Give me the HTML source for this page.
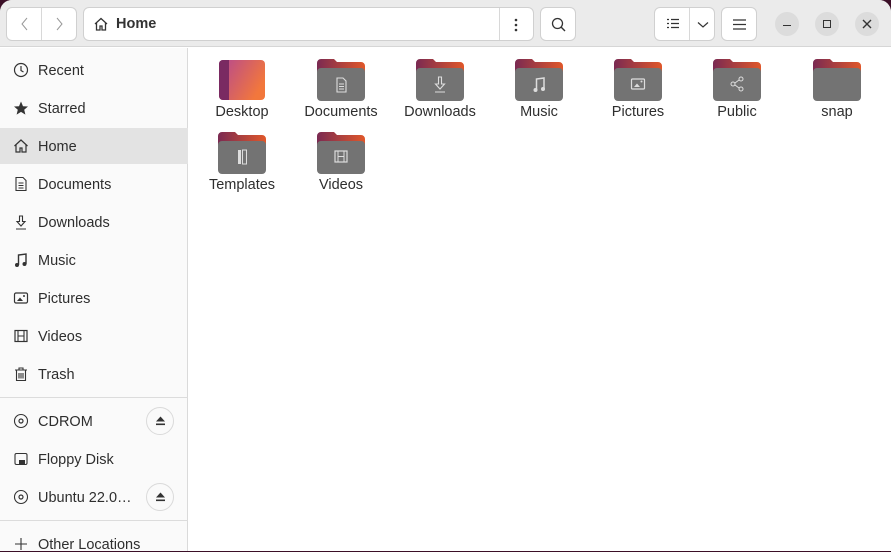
<!DOCTYPE html>
<html><head><meta charset="utf-8"><style>
*{margin:0;padding:0;box-sizing:border-box}
body{width:891px;height:552px;background:#3b0f27;font-family:"Liberation Sans","DejaVu Sans",sans-serif;position:relative;overflow:hidden;color:#2e2e2e}
.win{position:absolute;left:0;top:0;width:891px;height:551px;background:#fff;border-radius:12px 12px 0 0;overflow:hidden}
.hdr{position:absolute;left:0;top:0;width:891px;height:47px;background:#ebebeb;border-bottom:1px solid #d6d6d6}
.btn{position:absolute;background:#fff;border:1px solid #d0d0d0;border-radius:6px}
.side{position:absolute;left:0;top:48px;width:188px;height:503px;background:#fafafa;border-right:1px solid #dadada}
.it{position:absolute;left:0;width:188px;height:36px;font-size:14.5px;line-height:38px;padding-left:38px;color:#2e2e2e}
.it svg{position:absolute;left:13px;top:10px}
.sel{background:#e3e3e3}
.sep{position:absolute;left:0;width:188px;height:1px;background:#dcdcdc}
.ej{position:absolute;left:146px;width:28px;height:28px;border:1px solid #dadada;border-radius:50%;background:#fafafa}
.f{position:absolute;width:100px;text-align:center;font-size:14.5px;line-height:17px}
.f svg{display:block;margin:0 auto 3px}
.wc{position:absolute;top:12px;width:24px;height:24px;border-radius:50%;background:#dcdcdc}
</style></head><body>
<div class="win">
<div class="hdr">
 <div class="btn" style="left:6px;top:7px;width:71px;height:34px"><div style="position:absolute;left:34px;top:0;width:1px;height:32px;background:#d8d8d8"></div>
 <svg style="position:absolute;left:14px;top:9px" width="8" height="14"><path d="M6 1L1 7L6 13" stroke="#999" fill="none"/></svg>
 <svg style="position:absolute;left:48px;top:9px" width="8" height="14"><path d="M2 1L7 7L2 13" stroke="#999" fill="none"/></svg></div>
 <div class="btn" style="left:83px;top:7px;width:451px;height:34px">
 <svg style="position:absolute;left:9px;top:8px" width="16" height="16"><path d="M2 8L8 2.5L14 8M3.5 7V14H7V10H9V14H12.5V7" stroke="#333" stroke-width="1.3" fill="none"/></svg>
 <span style="position:absolute;left:32px;top:8px;font-weight:bold;font-size:14.5px;line-height:17px;color:#333">Home</span>
 <div style="position:absolute;left:415px;top:0;width:1px;height:32px;background:#d8d8d8"></div>
 <svg style="position:absolute;left:430px;top:10px" width="4" height="14"><circle cx="2" cy="2" r="1.3" fill="#333"/><circle cx="2" cy="7" r="1.3" fill="#333"/><circle cx="2" cy="12" r="1.3" fill="#333"/></svg></div>
 <div class="btn" style="left:540px;top:7px;width:36px;height:34px"><svg style="position:absolute;left:10px;top:9px" width="16" height="16"><circle cx="6.5" cy="6.5" r="5" stroke="#333" stroke-width="1.3" fill="none"/><path d="M10 10L14 14" stroke="#333" stroke-width="1.4"/></svg></div>
 <div class="btn" style="left:654px;top:7px;width:61px;height:34px"><div style="position:absolute;left:34px;top:0;width:1px;height:32px;background:#d8d8d8"></div>
 <svg style="position:absolute;left:11px;top:10px" width="14" height="12"><path d="M1 1.5h2M1 5.5h2M1 9.5h2M5 1.5h8M5 5.5h8M5 9.5h8" stroke="#333" stroke-width="1.3"/></svg>
 <svg style="position:absolute;left:42px;top:13px" width="12" height="8"><path d="M1 1.5L6 6L11 1.5" stroke="#333" stroke-width="1.2" fill="none"/></svg></div>
 <div class="btn" style="left:721px;top:7px;width:36px;height:34px"><svg style="position:absolute;left:11px;top:11px" width="13" height="11"><path d="M0 1h13M0 5.5h13M0 10h13" stroke="#333" stroke-width="1.2"/></svg></div>
 <div class="wc" style="left:775px"><div style="position:absolute;left:8px;top:13px;width:8px;height:1.3px;background:#333"></div></div>
 <div class="wc" style="left:815px"><div style="position:absolute;left:8px;top:8px;width:8px;height:8px;border:1.3px solid #333"></div></div>
 <div class="wc" style="left:855px"><svg style="position:absolute;left:7px;top:7px" width="10" height="10"><path d="M1 1L9 9M9 1L1 9" stroke="#333" stroke-width="1.4"/></svg></div>
</div>
<div class="side">
 <div class="it" style="top:4px"><svg width="16" height="16"><circle cx="8" cy="8" r="6.5" stroke="#333" fill="none" stroke-width="1.2"/><path d="M8 4V8.5L10.5 10" stroke="#333" fill="none" stroke-width="1.2"/></svg>Recent</div>
 <div class="it" style="top:42px"><svg width="16" height="16"><path d="M8 1.5L10 6.2L15 6.5L11.2 9.7L12.4 14.6L8 11.9L3.6 14.6L4.8 9.7L1 6.5L6 6.2Z" fill="#333"/></svg>Starred</div>
 <div class="it sel" style="top:80px"><svg width="16" height="16"><path d="M1.5 8L8 2L14.5 8M3 7V14H7V10H9V14H13V7" stroke="#333" stroke-width="1.2" fill="none"/></svg>Home</div>
 <div class="it" style="top:118px"><svg width="16" height="16"><path d="M3 1.5H10L13 4.5V14.5H3Z M5.5 7H10.5M5.5 9.5H10.5M5.5 12H10.5" stroke="#333" stroke-width="1.1" fill="none"/></svg>Documents</div>
 <div class="it" style="top:156px"><svg width="16" height="16"><path d="M6.5 2H9.5V7.5H12L8 12L4 7.5H6.5Z M3 15H13" stroke="#333" stroke-width="1.1" fill="none"/></svg>Downloads</div>
 <div class="it" style="top:194px"><svg width="16" height="16"><path d="M5.5 13V3L13 2V12" stroke="#333" stroke-width="1.4" fill="none"/><circle cx="4" cy="13" r="2" fill="#333"/><circle cx="11.5" cy="12" r="2" fill="#333"/></svg>Music</div>
 <div class="it" style="top:232px"><svg width="16" height="16"><rect x="1.5" y="3" width="13" height="10" rx="1.5" stroke="#333" stroke-width="1.2" fill="none"/><path d="M4 11L7 7.5L10 11Z" fill="#333"/><circle cx="11" cy="6" r="1" fill="#333"/></svg>Pictures</div>
 <div class="it" style="top:270px"><svg width="16" height="16"><rect x="2" y="2.5" width="12" height="11" stroke="#333" stroke-width="1.2" fill="none"/><path d="M5 2.5V13.5M11 2.5V13.5M5 8H11" stroke="#333" stroke-width="1.1"/></svg>Videos</div>
 <div class="it" style="top:308px"><svg width="16" height="16"><path d="M2 4H14M6 4V2H10V4M3.5 4.5V14.5H12.5V4.5M6 7V12.5M8 7V12.5M10 7V12.5" stroke="#333" stroke-width="1.1" fill="none"/></svg>Trash</div>
 <div class="sep" style="top:349px"></div>
 <div class="it" style="top:355px"><svg width="16" height="16"><circle cx="8" cy="8" r="6.5" stroke="#333" fill="none" stroke-width="1.1"/><circle cx="8" cy="8" r="2" stroke="#333" fill="none" stroke-width="1.2"/></svg>CDROM</div>
 <div class="ej" style="top:359px"><svg style="position:absolute;left:8px;top:8px" width="11" height="10"><path d="M5.5 0.5L10 5.5H1Z" fill="#333"/><rect x="1" y="7.5" width="9" height="1.6" fill="#333"/></svg></div>
 <div class="it" style="top:393px"><svg width="16" height="16"><rect x="2" y="2.5" width="12" height="11" rx="1.5" stroke="#333" stroke-width="1.1" fill="none"/><rect x="6" y="9" width="6" height="4.5" fill="#333"/></svg>Floppy Disk</div>
 <div class="it" style="top:431px"><svg width="16" height="16"><circle cx="8" cy="8" r="6.5" stroke="#333" fill="none" stroke-width="1.1"/><circle cx="8" cy="8" r="2" stroke="#333" fill="none" stroke-width="1.2"/></svg>Ubuntu 22.0…</div>
 <div class="ej" style="top:435px"><svg style="position:absolute;left:8px;top:8px" width="11" height="10"><path d="M5.5 0.5L10 5.5H1Z" fill="#333"/><rect x="1" y="7.5" width="9" height="1.6" fill="#333"/></svg></div>
 <div class="sep" style="top:472px"></div>
 <div class="it" style="top:478px"><svg width="16" height="16"><path d="M8 2V14M2 8H14" stroke="#333" stroke-width="1.1"/></svg>Other Locations</div>
</div>
<svg width="0" height="0" style="position:absolute"><defs>
<linearGradient id="tab" x1="0" x2="1" y1="0" y2="0"><stop offset="0" stop-color="#7a2a52"/><stop offset="1" stop-color="#e0572a"/></linearGradient>
<linearGradient id="dk" x1="0" x2="1" y1="0" y2="0.5"><stop offset="0" stop-color="#b44792"/><stop offset="1" stop-color="#f2773c"/></linearGradient>
</defs></svg>
<div class="f" style="left:192px;top:59px"><svg width="48" height="42"><rect x="1" y="1" width="46" height="40" rx="4" fill="url(#dk)"/><path d="M5 1H11V41H5A4 4 0 0 1 1 37V5A4 4 0 0 1 5 1Z" fill="#7a2a62"/></svg>Desktop</div>
<div class="f" style="left:291px;top:59px"><svg width="48" height="42"><path d="M4 0H17L20 3H44A4 4 0 0 1 48 7V20H0V4A4 4 0 0 1 4 0Z" fill="url(#tab)"/><rect x="0" y="9" width="48" height="33" rx="4" fill="#737373"/><path d="M20 19H26L29 22V33H20ZM22 25H27M22 27.5H27M22 30H27" stroke="#ddd" stroke-width="1.1" fill="none"/></svg>Documents</div>
<div class="f" style="left:390px;top:59px"><svg width="48" height="42"><path d="M4 0H17L20 3H44A4 4 0 0 1 48 7V20H0V4A4 4 0 0 1 4 0Z" fill="url(#tab)"/><rect x="0" y="9" width="48" height="33" rx="4" fill="#737373"/><path d="M22.5 18H25.5V25H28.5L24 30L19.5 25H22.5ZM19 33H29" stroke="#ddd" stroke-width="1.1" fill="none"/></svg>Downloads</div>
<div class="f" style="left:489px;top:59px"><svg width="48" height="42"><path d="M4 0H17L20 3H44A4 4 0 0 1 48 7V20H0V4A4 4 0 0 1 4 0Z" fill="url(#tab)"/><rect x="0" y="9" width="48" height="33" rx="4" fill="#737373"/><path d="M21.5 31V20L29 19V30" stroke="#ddd" stroke-width="1.5" fill="none"/><circle cx="20.5" cy="31" r="2" fill="#ddd"/><circle cx="28" cy="30" r="2" fill="#ddd"/></svg>Music</div>
<div class="f" style="left:588px;top:59px"><svg width="48" height="42"><path d="M4 0H17L20 3H44A4 4 0 0 1 48 7V20H0V4A4 4 0 0 1 4 0Z" fill="url(#tab)"/><rect x="0" y="9" width="48" height="33" rx="4" fill="#737373"/><rect x="17.5" y="20" width="13" height="10" rx="1" stroke="#ddd" stroke-width="1.2" fill="none"/><path d="M20 28L23 24.5L26 28Z" fill="#ddd"/><circle cx="27.5" cy="22.5" r="1" fill="#ddd"/></svg>Pictures</div>
<div class="f" style="left:687px;top:59px"><svg width="48" height="42"><path d="M4 0H17L20 3H44A4 4 0 0 1 48 7V20H0V4A4 4 0 0 1 4 0Z" fill="url(#tab)"/><rect x="0" y="9" width="48" height="33" rx="4" fill="#737373"/><circle cx="28" cy="20" r="2" stroke="#ddd" fill="none"/><circle cx="20" cy="25" r="2" stroke="#ddd" fill="none"/><circle cx="28" cy="30" r="2" stroke="#ddd" fill="none"/><path d="M22 24L26 21M22 26L26 29" stroke="#ddd"/></svg>Public</div>
<div class="f" style="left:787px;top:59px"><svg width="48" height="42"><path d="M4 0H17L20 3H44A4 4 0 0 1 48 7V20H0V4A4 4 0 0 1 4 0Z" fill="url(#tab)"/><rect x="0" y="9" width="48" height="33" rx="4" fill="#737373"/></svg>snap</div>
<div class="f" style="left:192px;top:132px"><svg width="48" height="42"><path d="M4 0H17L20 3H44A4 4 0 0 1 48 7V20H0V4A4 4 0 0 1 4 0Z" fill="url(#tab)"/><rect x="0" y="9" width="48" height="33" rx="4" fill="#737373"/><rect x="20" y="18" width="3" height="14" fill="#ddd"/><rect x="24.5" y="18" width="4" height="14" stroke="#ddd" fill="none"/></svg>Templates</div>
<div class="f" style="left:291px;top:132px"><svg width="48" height="42"><path d="M4 0H17L20 3H44A4 4 0 0 1 48 7V20H0V4A4 4 0 0 1 4 0Z" fill="url(#tab)"/><rect x="0" y="9" width="48" height="33" rx="4" fill="#737373"/><rect x="18" y="19" width="12" height="11" stroke="#ddd" stroke-width="1.2" fill="none"/><path d="M21 19V30M27 19V30M21 24.5H27" stroke="#ddd"/></svg>Videos</div>
</div>
</body></html>
